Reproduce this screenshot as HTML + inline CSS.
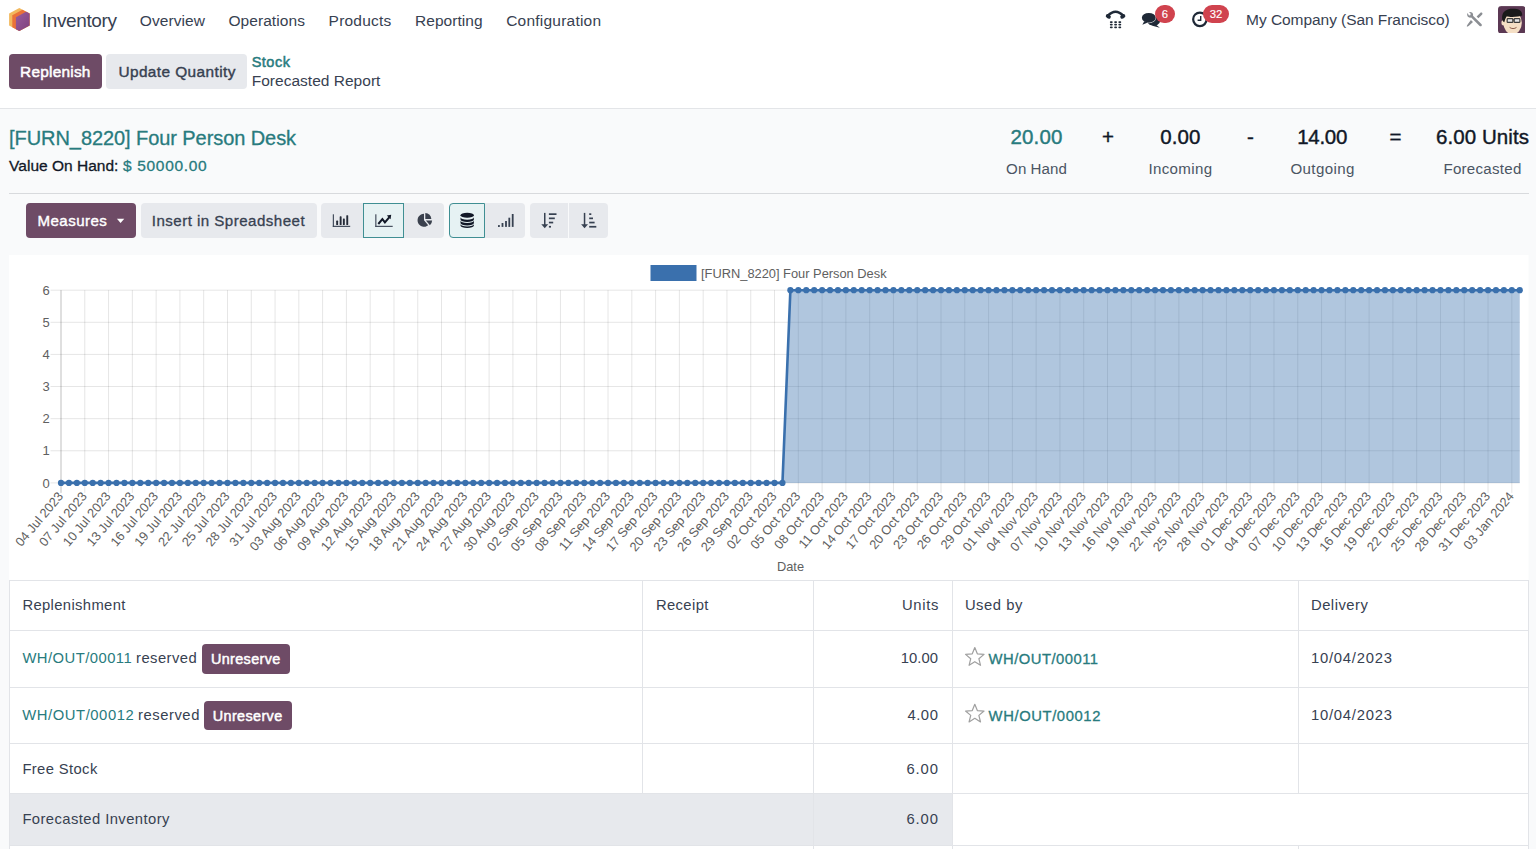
<!DOCTYPE html>
<html><head><meta charset="utf-8"><title>Inventory - Forecasted Report</title>
<style>
*{box-sizing:border-box;margin:0;padding:0}
html,body{width:1536px;height:849px;overflow:hidden}
body{position:relative;background:#f9fafb;font-family:"Liberation Sans",sans-serif;color:#374151}
.abs{position:absolute}
.t{position:absolute;white-space:nowrap;line-height:1;font-family:"Liberation Sans",sans-serif}
.top{position:absolute;left:0;top:0;width:1536px;height:108.5px;background:#fff;border-bottom:1.5px solid #e3e5e8}
.btn{position:absolute;border-radius:4px}
.prim{background:#6e4b66}
.sec{background:#e7e9ed}
.act{background:#e6f2f3;border:1px solid #3f8f93}
.hr{position:absolute;height:1px;background:#d8dadd}
.tbl{position:absolute;background:#fff}
.hl{position:absolute;height:1px;background:#e2e4e8}
.vl{position:absolute;width:1px;background:#e2e4e8}
.badge{position:absolute;background:#d0434e;color:#fff;font-weight:400;-webkit-text-stroke:0.15px #fff;font-size:11.3px;line-height:18px;text-align:center;border-radius:9px}

</style></head><body>
<div class="top"></div>
<!-- logo -->
<svg class="abs" style="left:0;top:0" width="40" height="40" viewBox="0 0 40 40">
<defs><linearGradient id="pg" x1="0" y1="0" x2="1" y2="1"><stop offset="0" stop-color="#9a5c9d"/><stop offset="1" stop-color="#7f417d"/></linearGradient></defs>
<polygon points="19.3,8 29.6,13.5 29.6,25.6 19.3,31.1 9.1,25.6 9.1,13.5" fill="#f2b95e"/>
<polygon points="12.3,15.2 22.5,9.7 29.6,13.5 29.6,25.6 19.3,31.1 12.3,27.3" fill="#ea7139"/>
<polygon points="15.9,17.15 26.1,11.65 29.6,13.5 29.6,25.6 19.3,31.1 15.9,29.25" fill="url(#pg)"/>
</svg>
<!-- phone icon -->
<svg class="abs" style="left:1100px;top:5px" width="30" height="28" viewBox="0 0 30 28">
<g fill="#1f2937">
<path d="M7.6,11 Q15.55,2.6 23.5,11" fill="none" stroke="#1f2937" stroke-width="2.5"/>
<ellipse cx="8.3" cy="11.4" rx="2.7" ry="2.1" transform="rotate(35 8.3 11.4)"/>
<ellipse cx="22.8" cy="11.4" rx="2.7" ry="2.1" transform="rotate(-35 22.8 11.4)"/>
<rect x="9.9" y="16.2" width="2.8" height="1.8" rx="0.8"/><rect x="14.2" y="16.2" width="2.8" height="1.8" rx="0.8"/><rect x="18.4" y="16.2" width="2.8" height="1.8" rx="0.8"/>
<rect x="9.9" y="18.8" width="2.8" height="1.8" rx="0.8"/><rect x="14.2" y="18.8" width="2.8" height="1.8" rx="0.8"/><rect x="18.4" y="18.8" width="2.8" height="1.8" rx="0.8"/>
<rect x="9.9" y="21.4" width="2.8" height="1.8" rx="0.8"/><rect x="14.2" y="21.4" width="2.8" height="1.8" rx="0.8"/><rect x="18.4" y="21.4" width="2.8" height="1.8" rx="0.8"/>
</g></svg>
<!-- chat icon -->
<svg class="abs" style="left:1138px;top:3px" width="40" height="30" viewBox="0 0 40 30">
<g fill="#1f2937">
<ellipse cx="15.6" cy="18.2" rx="6.4" ry="4.4"/>
<polygon points="17.5,21.2 21.8,24.8 13.5,22.5"/>
<ellipse cx="10.8" cy="14.85" rx="7.3" ry="5.3" fill="#fff"/>
<ellipse cx="10.8" cy="14.85" rx="6.9" ry="4.95"/>
<polygon points="6.2,18.3 4.4,21.8 9.8,19.6"/>
</g></svg>
<div class="badge" style="left:1155.3px;top:5.3px;width:19.3px;height:17.8px">6</div>
<!-- clock icon -->
<svg class="abs" style="left:1188px;top:3px" width="30" height="30" viewBox="0 0 30 30">
<circle cx="11.9" cy="16.35" r="6.75" fill="none" stroke="#1f2937" stroke-width="2.2"/>
<path d="M12.7,12.9 V17.3 H9.6" fill="none" stroke="#1f2937" stroke-width="1.4"/>
</svg>
<div class="badge" style="left:1202.8px;top:5.3px;width:25.8px;height:17.8px;padding-left:0.5px">32</div>
<!-- tools icon -->
<svg class="abs" style="left:1460px;top:3px" width="30" height="30" viewBox="0 0 30 30">
<g fill="#8b8e93">
<path d="M7.6,10 C6.8,11.3 7.1,13 8.3,14 C9.1,14.6 10.2,14.8 11.2,14.5 L19.6,22.9 C20.2,23.5 21,23.5 21.5,23 C22,22.5 22,21.7 21.4,21.1 L13,12.8 C13.3,11.8 13.1,10.6 12.3,9.8 C11.4,9 10.1,8.7 9,9.1 L10.7,10.8 L10.4,12.3 L8.9,12.6 Z"/>
<path d="M16.6,13.6 L20.2,9.9 C20.8,9.3 21.6,9.3 22.1,9.8 C22.6,10.3 22.6,11.1 22,11.7 L18.4,15.3 Z"/>
<path d="M10.9,16.9 L13,19 L9.2,22.6 C8.3,23.4 7.2,23.9 6.9,23.6 C6.6,23.3 7,22.2 7.8,21.3 Z"/>
</g></svg>
<!-- avatar -->
<svg class="abs" style="left:1497.6px;top:5.7px" width="27.6" height="27.8" viewBox="0 0 28 28">
<defs><clipPath id="avc"><rect x="0" y="0" width="28" height="28" rx="3.5"/></clipPath></defs>
<g clip-path="url(#avc)">
<rect x="0" y="0" width="28" height="28" fill="#5b3853"/>
<ellipse cx="14.8" cy="17" rx="9.4" ry="11.6" fill="#f5dfc5"/>
<ellipse cx="5.6" cy="17" rx="2.1" ry="2.8" fill="#f5dfc5"/>
<path d="M4.2,13 C3.5,5 9,2.6 15,2.6 C21,2.6 25,4.5 24.6,9.6 C22,11 13,11.5 8.6,10.6 C7.6,12.4 6.8,14.4 6.4,16.4 C5.2,15.6 4.4,14.4 4.2,13 Z" fill="#1a1a1a"/>
<rect x="9.3" y="12.8" width="5.8" height="3.8" rx="0.8" fill="#e6e6e6" stroke="#3a3a3a" stroke-width="1.2"/>
<rect x="16.4" y="12.8" width="5.8" height="3.8" rx="0.8" fill="#e6e6e6" stroke="#3a3a3a" stroke-width="1.2"/>
<path d="M14.6,14 H16.6" stroke="#3a3a3a" stroke-width="1"/>
<path d="M11.8,21.6 C13.5,23.2 17,23.2 18.8,21.6" stroke="#8a5a48" stroke-width="1" fill="none"/>
</g></svg>
<!-- control panel buttons -->
<div class="btn prim" style="left:8.8px;top:53.8px;width:93px;height:35.3px"></div>
<div class="btn sec" style="left:106.4px;top:53.8px;width:140.5px;height:35.3px"></div>
<!-- header hr -->
<div class="hr" style="left:8.5px;top:193px;width:1520px"></div>
<!-- toolbar -->
<div class="btn prim" style="left:25.9px;top:202.8px;width:110.1px;height:35.2px"></div>
<svg class="abs" style="left:116px;top:217px" width="10" height="7" viewBox="0 0 10 7"><polygon points="0.9,1.8 8.3,1.8 4.6,6.1" fill="#fff"/></svg>
<div class="btn sec" style="left:140.5px;top:202.8px;width:176px;height:35.2px"></div>
<div class="btn sec" style="left:321.3px;top:202.8px;width:122.6px;height:35.2px"></div>
<div class="abs act" style="left:363.2px;top:202.8px;width:40.8px;height:35.2px"></div>
<div class="btn sec" style="left:448.8px;top:202.8px;width:76.2px;height:35.2px"></div>
<div class="abs act" style="left:448.8px;top:202.8px;width:36px;height:35.2px;border-radius:4px 0 0 4px"></div>
<div class="btn sec" style="left:529.8px;top:202.8px;width:78.3px;height:35.2px"></div>
<div class="abs" style="left:568.4px;top:202.8px;width:1px;height:35.2px;background:#f9fafb"></div>
<!-- toolbar icons -->
<svg class="abs" style="left:320px;top:200px" width="300" height="40" viewBox="320 200 300 40">
<g fill="#374151">
<rect x="332.8" y="214.3" width="1.1" height="12.6"/><rect x="332.8" y="225.8" width="17.4" height="1.1"/>
<g fill="#252b38"><rect x="336.2" y="220.6" width="1.9" height="4.4" rx="0.6"/><rect x="339.7" y="216.3" width="1.9" height="8.7" rx="0.6"/><rect x="342.9" y="218.5" width="1.9" height="6.5" rx="0.6"/><rect x="346.3" y="215.2" width="1.9" height="9.8" rx="0.6"/></g>
<rect x="375.3" y="214.3" width="1.1" height="12.6"/><rect x="375.3" y="225.8" width="17.4" height="1.1"/>
</g>
<polyline points="378.3,224 382.4,219.2 384.9,222.4 389.2,217.3" fill="none" stroke="#111827" stroke-width="2" stroke-linejoin="miter"/>
<polygon points="386.8,215.6 391.2,214.8 390.6,219.3" fill="#111827"/>
<g fill="#3a404d">
<path d="M424,220.3 L424,213.8 A6.5,6.5 0 1 0 428.2,225.3 Z"/>
<path d="M425.3,218.9 V212.9 A6,6 0 0 1 431.3,218.9 Z"/>
<path d="M425.9,220.6 H432.1 A6.3,6.3 0 0 1 429.9,225.3 Z"/>
</g>
<g fill="#111827">
<ellipse cx="467.2" cy="215.3" rx="6.7" ry="2.5"/>
<path d="M460.5,217.2 A6.7,2.5 0 0 0 473.9,217.2 V219.6 A6.7,2.5 0 0 1 460.5,219.6 Z"/>
<path d="M460.5,220.6 A6.7,2.5 0 0 0 473.9,220.6 V223 A6.7,2.5 0 0 1 460.5,223 Z"/>
<path d="M460.5,224 A6.7,2.5 0 0 0 473.9,224 V225.4 A6.7,2.5 0 0 1 460.5,225.4 Z"/>
</g>
<g fill="#374151">
<rect x="498" y="225" width="1.8" height="1.9" rx="0.5"/><rect x="501.6" y="223" width="1.8" height="3.9"/><rect x="505.1" y="221" width="1.8" height="5.9"/><rect x="508.4" y="217.7" width="1.8" height="9.2"/><rect x="511.8" y="214" width="1.8" height="12.9"/>
<rect x="544" y="212.9" width="1.5" height="12.5"/><polygon points="541.3,224.3 548.2,224.3 544.75,228.2"/>
<rect x="548.9" y="213.3" width="7.6" height="1.7"/><rect x="548.9" y="217.5" width="5.9" height="1.7"/><rect x="548.9" y="221.7" width="4.3" height="1.7"/><rect x="548.9" y="225.9" width="2.1" height="1.7"/>
<rect x="583.8" y="212.9" width="1.5" height="12.5"/><polygon points="581.1,224.3 588,224.3 584.55,228.2"/>
<rect x="589.2" y="213.3" width="2.1" height="1.7"/><rect x="589.2" y="217.5" width="3.8" height="1.7"/><rect x="589.2" y="221.7" width="5.4" height="1.7"/><rect x="589.2" y="225.9" width="7.1" height="1.7"/>
</g>
</svg>
<svg width="1536" height="849" viewBox="0 0 1536 849" style="position:absolute;left:0;top:0">
<rect x="9" y="255" width="1519.5" height="325" fill="#ffffff"/>
<line x1="50.5" y1="482.90" x2="1519.75" y2="482.90" stroke="rgba(0,0,0,0.1)" stroke-width="1"/>
<line x1="50.5" y1="450.78" x2="1519.75" y2="450.78" stroke="rgba(0,0,0,0.1)" stroke-width="1"/>
<line x1="50.5" y1="418.66" x2="1519.75" y2="418.66" stroke="rgba(0,0,0,0.1)" stroke-width="1"/>
<line x1="50.5" y1="386.54" x2="1519.75" y2="386.54" stroke="rgba(0,0,0,0.1)" stroke-width="1"/>
<line x1="50.5" y1="354.42" x2="1519.75" y2="354.42" stroke="rgba(0,0,0,0.1)" stroke-width="1"/>
<line x1="50.5" y1="322.30" x2="1519.75" y2="322.30" stroke="rgba(0,0,0,0.1)" stroke-width="1"/>
<line x1="50.5" y1="290.18" x2="1519.75" y2="290.18" stroke="rgba(0,0,0,0.1)" stroke-width="1"/>
<line x1="61.00" y1="290.18" x2="61.00" y2="492.90" stroke="rgba(0,0,0,0.25)" stroke-width="1"/>
<line x1="84.78" y1="290.18" x2="84.78" y2="492.90" stroke="rgba(0,0,0,0.1)" stroke-width="1"/>
<line x1="108.57" y1="290.18" x2="108.57" y2="492.90" stroke="rgba(0,0,0,0.1)" stroke-width="1"/>
<line x1="132.35" y1="290.18" x2="132.35" y2="492.90" stroke="rgba(0,0,0,0.1)" stroke-width="1"/>
<line x1="156.14" y1="290.18" x2="156.14" y2="492.90" stroke="rgba(0,0,0,0.1)" stroke-width="1"/>
<line x1="179.92" y1="290.18" x2="179.92" y2="492.90" stroke="rgba(0,0,0,0.1)" stroke-width="1"/>
<line x1="203.70" y1="290.18" x2="203.70" y2="492.90" stroke="rgba(0,0,0,0.1)" stroke-width="1"/>
<line x1="227.49" y1="290.18" x2="227.49" y2="492.90" stroke="rgba(0,0,0,0.1)" stroke-width="1"/>
<line x1="251.27" y1="290.18" x2="251.27" y2="492.90" stroke="rgba(0,0,0,0.1)" stroke-width="1"/>
<line x1="275.06" y1="290.18" x2="275.06" y2="492.90" stroke="rgba(0,0,0,0.1)" stroke-width="1"/>
<line x1="298.84" y1="290.18" x2="298.84" y2="492.90" stroke="rgba(0,0,0,0.1)" stroke-width="1"/>
<line x1="322.62" y1="290.18" x2="322.62" y2="492.90" stroke="rgba(0,0,0,0.1)" stroke-width="1"/>
<line x1="346.41" y1="290.18" x2="346.41" y2="492.90" stroke="rgba(0,0,0,0.1)" stroke-width="1"/>
<line x1="370.19" y1="290.18" x2="370.19" y2="492.90" stroke="rgba(0,0,0,0.1)" stroke-width="1"/>
<line x1="393.98" y1="290.18" x2="393.98" y2="492.90" stroke="rgba(0,0,0,0.1)" stroke-width="1"/>
<line x1="417.76" y1="290.18" x2="417.76" y2="492.90" stroke="rgba(0,0,0,0.1)" stroke-width="1"/>
<line x1="441.54" y1="290.18" x2="441.54" y2="492.90" stroke="rgba(0,0,0,0.1)" stroke-width="1"/>
<line x1="465.33" y1="290.18" x2="465.33" y2="492.90" stroke="rgba(0,0,0,0.1)" stroke-width="1"/>
<line x1="489.11" y1="290.18" x2="489.11" y2="492.90" stroke="rgba(0,0,0,0.1)" stroke-width="1"/>
<line x1="512.90" y1="290.18" x2="512.90" y2="492.90" stroke="rgba(0,0,0,0.1)" stroke-width="1"/>
<line x1="536.68" y1="290.18" x2="536.68" y2="492.90" stroke="rgba(0,0,0,0.1)" stroke-width="1"/>
<line x1="560.46" y1="290.18" x2="560.46" y2="492.90" stroke="rgba(0,0,0,0.1)" stroke-width="1"/>
<line x1="584.25" y1="290.18" x2="584.25" y2="492.90" stroke="rgba(0,0,0,0.1)" stroke-width="1"/>
<line x1="608.03" y1="290.18" x2="608.03" y2="492.90" stroke="rgba(0,0,0,0.1)" stroke-width="1"/>
<line x1="631.82" y1="290.18" x2="631.82" y2="492.90" stroke="rgba(0,0,0,0.1)" stroke-width="1"/>
<line x1="655.60" y1="290.18" x2="655.60" y2="492.90" stroke="rgba(0,0,0,0.1)" stroke-width="1"/>
<line x1="679.38" y1="290.18" x2="679.38" y2="492.90" stroke="rgba(0,0,0,0.1)" stroke-width="1"/>
<line x1="703.17" y1="290.18" x2="703.17" y2="492.90" stroke="rgba(0,0,0,0.1)" stroke-width="1"/>
<line x1="726.95" y1="290.18" x2="726.95" y2="492.90" stroke="rgba(0,0,0,0.1)" stroke-width="1"/>
<line x1="750.74" y1="290.18" x2="750.74" y2="492.90" stroke="rgba(0,0,0,0.1)" stroke-width="1"/>
<line x1="774.52" y1="290.18" x2="774.52" y2="492.90" stroke="rgba(0,0,0,0.1)" stroke-width="1"/>
<line x1="798.30" y1="290.18" x2="798.30" y2="492.90" stroke="rgba(0,0,0,0.1)" stroke-width="1"/>
<line x1="822.09" y1="290.18" x2="822.09" y2="492.90" stroke="rgba(0,0,0,0.1)" stroke-width="1"/>
<line x1="845.87" y1="290.18" x2="845.87" y2="492.90" stroke="rgba(0,0,0,0.1)" stroke-width="1"/>
<line x1="869.66" y1="290.18" x2="869.66" y2="492.90" stroke="rgba(0,0,0,0.1)" stroke-width="1"/>
<line x1="893.44" y1="290.18" x2="893.44" y2="492.90" stroke="rgba(0,0,0,0.1)" stroke-width="1"/>
<line x1="917.22" y1="290.18" x2="917.22" y2="492.90" stroke="rgba(0,0,0,0.1)" stroke-width="1"/>
<line x1="941.01" y1="290.18" x2="941.01" y2="492.90" stroke="rgba(0,0,0,0.1)" stroke-width="1"/>
<line x1="964.79" y1="290.18" x2="964.79" y2="492.90" stroke="rgba(0,0,0,0.1)" stroke-width="1"/>
<line x1="988.58" y1="290.18" x2="988.58" y2="492.90" stroke="rgba(0,0,0,0.1)" stroke-width="1"/>
<line x1="1012.36" y1="290.18" x2="1012.36" y2="492.90" stroke="rgba(0,0,0,0.1)" stroke-width="1"/>
<line x1="1036.14" y1="290.18" x2="1036.14" y2="492.90" stroke="rgba(0,0,0,0.1)" stroke-width="1"/>
<line x1="1059.93" y1="290.18" x2="1059.93" y2="492.90" stroke="rgba(0,0,0,0.1)" stroke-width="1"/>
<line x1="1083.71" y1="290.18" x2="1083.71" y2="492.90" stroke="rgba(0,0,0,0.1)" stroke-width="1"/>
<line x1="1107.50" y1="290.18" x2="1107.50" y2="492.90" stroke="rgba(0,0,0,0.1)" stroke-width="1"/>
<line x1="1131.28" y1="290.18" x2="1131.28" y2="492.90" stroke="rgba(0,0,0,0.1)" stroke-width="1"/>
<line x1="1155.06" y1="290.18" x2="1155.06" y2="492.90" stroke="rgba(0,0,0,0.1)" stroke-width="1"/>
<line x1="1178.85" y1="290.18" x2="1178.85" y2="492.90" stroke="rgba(0,0,0,0.1)" stroke-width="1"/>
<line x1="1202.63" y1="290.18" x2="1202.63" y2="492.90" stroke="rgba(0,0,0,0.1)" stroke-width="1"/>
<line x1="1226.42" y1="290.18" x2="1226.42" y2="492.90" stroke="rgba(0,0,0,0.1)" stroke-width="1"/>
<line x1="1250.20" y1="290.18" x2="1250.20" y2="492.90" stroke="rgba(0,0,0,0.1)" stroke-width="1"/>
<line x1="1273.98" y1="290.18" x2="1273.98" y2="492.90" stroke="rgba(0,0,0,0.1)" stroke-width="1"/>
<line x1="1297.77" y1="290.18" x2="1297.77" y2="492.90" stroke="rgba(0,0,0,0.1)" stroke-width="1"/>
<line x1="1321.55" y1="290.18" x2="1321.55" y2="492.90" stroke="rgba(0,0,0,0.1)" stroke-width="1"/>
<line x1="1345.34" y1="290.18" x2="1345.34" y2="492.90" stroke="rgba(0,0,0,0.1)" stroke-width="1"/>
<line x1="1369.12" y1="290.18" x2="1369.12" y2="492.90" stroke="rgba(0,0,0,0.1)" stroke-width="1"/>
<line x1="1392.90" y1="290.18" x2="1392.90" y2="492.90" stroke="rgba(0,0,0,0.1)" stroke-width="1"/>
<line x1="1416.69" y1="290.18" x2="1416.69" y2="492.90" stroke="rgba(0,0,0,0.1)" stroke-width="1"/>
<line x1="1440.47" y1="290.18" x2="1440.47" y2="492.90" stroke="rgba(0,0,0,0.1)" stroke-width="1"/>
<line x1="1464.26" y1="290.18" x2="1464.26" y2="492.90" stroke="rgba(0,0,0,0.1)" stroke-width="1"/>
<line x1="1488.04" y1="290.18" x2="1488.04" y2="492.90" stroke="rgba(0,0,0,0.1)" stroke-width="1"/>
<line x1="1511.82" y1="290.18" x2="1511.82" y2="492.90" stroke="rgba(0,0,0,0.1)" stroke-width="1"/>
<polygon points="61.00,482.90 61.00,482.90 68.93,482.90 76.86,482.90 84.78,482.90 92.71,482.90 100.64,482.90 108.57,482.90 116.50,482.90 124.42,482.90 132.35,482.90 140.28,482.90 148.21,482.90 156.14,482.90 164.06,482.90 171.99,482.90 179.92,482.90 187.85,482.90 195.78,482.90 203.70,482.90 211.63,482.90 219.56,482.90 227.49,482.90 235.42,482.90 243.34,482.90 251.27,482.90 259.20,482.90 267.13,482.90 275.06,482.90 282.98,482.90 290.91,482.90 298.84,482.90 306.77,482.90 314.70,482.90 322.62,482.90 330.55,482.90 338.48,482.90 346.41,482.90 354.34,482.90 362.26,482.90 370.19,482.90 378.12,482.90 386.05,482.90 393.98,482.90 401.90,482.90 409.83,482.90 417.76,482.90 425.69,482.90 433.62,482.90 441.54,482.90 449.47,482.90 457.40,482.90 465.33,482.90 473.26,482.90 481.18,482.90 489.11,482.90 497.04,482.90 504.97,482.90 512.90,482.90 520.82,482.90 528.75,482.90 536.68,482.90 544.61,482.90 552.54,482.90 560.46,482.90 568.39,482.90 576.32,482.90 584.25,482.90 592.18,482.90 600.10,482.90 608.03,482.90 615.96,482.90 623.89,482.90 631.82,482.90 639.74,482.90 647.67,482.90 655.60,482.90 663.53,482.90 671.46,482.90 679.38,482.90 687.31,482.90 695.24,482.90 703.17,482.90 711.10,482.90 719.02,482.90 726.95,482.90 734.88,482.90 742.81,482.90 750.74,482.90 758.66,482.90 766.59,482.90 774.52,482.90 782.45,482.90 790.38,290.18 798.30,290.18 806.23,290.18 814.16,290.18 822.09,290.18 830.02,290.18 837.94,290.18 845.87,290.18 853.80,290.18 861.73,290.18 869.66,290.18 877.58,290.18 885.51,290.18 893.44,290.18 901.37,290.18 909.30,290.18 917.22,290.18 925.15,290.18 933.08,290.18 941.01,290.18 948.94,290.18 956.86,290.18 964.79,290.18 972.72,290.18 980.65,290.18 988.58,290.18 996.50,290.18 1004.43,290.18 1012.36,290.18 1020.29,290.18 1028.22,290.18 1036.14,290.18 1044.07,290.18 1052.00,290.18 1059.93,290.18 1067.86,290.18 1075.78,290.18 1083.71,290.18 1091.64,290.18 1099.57,290.18 1107.50,290.18 1115.42,290.18 1123.35,290.18 1131.28,290.18 1139.21,290.18 1147.14,290.18 1155.06,290.18 1162.99,290.18 1170.92,290.18 1178.85,290.18 1186.78,290.18 1194.70,290.18 1202.63,290.18 1210.56,290.18 1218.49,290.18 1226.42,290.18 1234.34,290.18 1242.27,290.18 1250.20,290.18 1258.13,290.18 1266.06,290.18 1273.98,290.18 1281.91,290.18 1289.84,290.18 1297.77,290.18 1305.70,290.18 1313.62,290.18 1321.55,290.18 1329.48,290.18 1337.41,290.18 1345.34,290.18 1353.26,290.18 1361.19,290.18 1369.12,290.18 1377.05,290.18 1384.98,290.18 1392.90,290.18 1400.83,290.18 1408.76,290.18 1416.69,290.18 1424.62,290.18 1432.54,290.18 1440.47,290.18 1448.40,290.18 1456.33,290.18 1464.26,290.18 1472.18,290.18 1480.11,290.18 1488.04,290.18 1495.97,290.18 1503.90,290.18 1511.82,290.18 1519.75,290.18 1519.75,482.90" fill="rgba(58,112,173,0.4)"/>
<polyline points="61.00,482.90 68.93,482.90 76.86,482.90 84.78,482.90 92.71,482.90 100.64,482.90 108.57,482.90 116.50,482.90 124.42,482.90 132.35,482.90 140.28,482.90 148.21,482.90 156.14,482.90 164.06,482.90 171.99,482.90 179.92,482.90 187.85,482.90 195.78,482.90 203.70,482.90 211.63,482.90 219.56,482.90 227.49,482.90 235.42,482.90 243.34,482.90 251.27,482.90 259.20,482.90 267.13,482.90 275.06,482.90 282.98,482.90 290.91,482.90 298.84,482.90 306.77,482.90 314.70,482.90 322.62,482.90 330.55,482.90 338.48,482.90 346.41,482.90 354.34,482.90 362.26,482.90 370.19,482.90 378.12,482.90 386.05,482.90 393.98,482.90 401.90,482.90 409.83,482.90 417.76,482.90 425.69,482.90 433.62,482.90 441.54,482.90 449.47,482.90 457.40,482.90 465.33,482.90 473.26,482.90 481.18,482.90 489.11,482.90 497.04,482.90 504.97,482.90 512.90,482.90 520.82,482.90 528.75,482.90 536.68,482.90 544.61,482.90 552.54,482.90 560.46,482.90 568.39,482.90 576.32,482.90 584.25,482.90 592.18,482.90 600.10,482.90 608.03,482.90 615.96,482.90 623.89,482.90 631.82,482.90 639.74,482.90 647.67,482.90 655.60,482.90 663.53,482.90 671.46,482.90 679.38,482.90 687.31,482.90 695.24,482.90 703.17,482.90 711.10,482.90 719.02,482.90 726.95,482.90 734.88,482.90 742.81,482.90 750.74,482.90 758.66,482.90 766.59,482.90 774.52,482.90 782.45,482.90 790.38,290.18 798.30,290.18 806.23,290.18 814.16,290.18 822.09,290.18 830.02,290.18 837.94,290.18 845.87,290.18 853.80,290.18 861.73,290.18 869.66,290.18 877.58,290.18 885.51,290.18 893.44,290.18 901.37,290.18 909.30,290.18 917.22,290.18 925.15,290.18 933.08,290.18 941.01,290.18 948.94,290.18 956.86,290.18 964.79,290.18 972.72,290.18 980.65,290.18 988.58,290.18 996.50,290.18 1004.43,290.18 1012.36,290.18 1020.29,290.18 1028.22,290.18 1036.14,290.18 1044.07,290.18 1052.00,290.18 1059.93,290.18 1067.86,290.18 1075.78,290.18 1083.71,290.18 1091.64,290.18 1099.57,290.18 1107.50,290.18 1115.42,290.18 1123.35,290.18 1131.28,290.18 1139.21,290.18 1147.14,290.18 1155.06,290.18 1162.99,290.18 1170.92,290.18 1178.85,290.18 1186.78,290.18 1194.70,290.18 1202.63,290.18 1210.56,290.18 1218.49,290.18 1226.42,290.18 1234.34,290.18 1242.27,290.18 1250.20,290.18 1258.13,290.18 1266.06,290.18 1273.98,290.18 1281.91,290.18 1289.84,290.18 1297.77,290.18 1305.70,290.18 1313.62,290.18 1321.55,290.18 1329.48,290.18 1337.41,290.18 1345.34,290.18 1353.26,290.18 1361.19,290.18 1369.12,290.18 1377.05,290.18 1384.98,290.18 1392.90,290.18 1400.83,290.18 1408.76,290.18 1416.69,290.18 1424.62,290.18 1432.54,290.18 1440.47,290.18 1448.40,290.18 1456.33,290.18 1464.26,290.18 1472.18,290.18 1480.11,290.18 1488.04,290.18 1495.97,290.18 1503.90,290.18 1511.82,290.18 1519.75,290.18" fill="none" stroke="#3a70ad" stroke-width="2.6"/>
<circle cx="61.00" cy="482.90" r="3.1" fill="#3a70ad"/>
<circle cx="68.93" cy="482.90" r="3.1" fill="#3a70ad"/>
<circle cx="76.86" cy="482.90" r="3.1" fill="#3a70ad"/>
<circle cx="84.78" cy="482.90" r="3.1" fill="#3a70ad"/>
<circle cx="92.71" cy="482.90" r="3.1" fill="#3a70ad"/>
<circle cx="100.64" cy="482.90" r="3.1" fill="#3a70ad"/>
<circle cx="108.57" cy="482.90" r="3.1" fill="#3a70ad"/>
<circle cx="116.50" cy="482.90" r="3.1" fill="#3a70ad"/>
<circle cx="124.42" cy="482.90" r="3.1" fill="#3a70ad"/>
<circle cx="132.35" cy="482.90" r="3.1" fill="#3a70ad"/>
<circle cx="140.28" cy="482.90" r="3.1" fill="#3a70ad"/>
<circle cx="148.21" cy="482.90" r="3.1" fill="#3a70ad"/>
<circle cx="156.14" cy="482.90" r="3.1" fill="#3a70ad"/>
<circle cx="164.06" cy="482.90" r="3.1" fill="#3a70ad"/>
<circle cx="171.99" cy="482.90" r="3.1" fill="#3a70ad"/>
<circle cx="179.92" cy="482.90" r="3.1" fill="#3a70ad"/>
<circle cx="187.85" cy="482.90" r="3.1" fill="#3a70ad"/>
<circle cx="195.78" cy="482.90" r="3.1" fill="#3a70ad"/>
<circle cx="203.70" cy="482.90" r="3.1" fill="#3a70ad"/>
<circle cx="211.63" cy="482.90" r="3.1" fill="#3a70ad"/>
<circle cx="219.56" cy="482.90" r="3.1" fill="#3a70ad"/>
<circle cx="227.49" cy="482.90" r="3.1" fill="#3a70ad"/>
<circle cx="235.42" cy="482.90" r="3.1" fill="#3a70ad"/>
<circle cx="243.34" cy="482.90" r="3.1" fill="#3a70ad"/>
<circle cx="251.27" cy="482.90" r="3.1" fill="#3a70ad"/>
<circle cx="259.20" cy="482.90" r="3.1" fill="#3a70ad"/>
<circle cx="267.13" cy="482.90" r="3.1" fill="#3a70ad"/>
<circle cx="275.06" cy="482.90" r="3.1" fill="#3a70ad"/>
<circle cx="282.98" cy="482.90" r="3.1" fill="#3a70ad"/>
<circle cx="290.91" cy="482.90" r="3.1" fill="#3a70ad"/>
<circle cx="298.84" cy="482.90" r="3.1" fill="#3a70ad"/>
<circle cx="306.77" cy="482.90" r="3.1" fill="#3a70ad"/>
<circle cx="314.70" cy="482.90" r="3.1" fill="#3a70ad"/>
<circle cx="322.62" cy="482.90" r="3.1" fill="#3a70ad"/>
<circle cx="330.55" cy="482.90" r="3.1" fill="#3a70ad"/>
<circle cx="338.48" cy="482.90" r="3.1" fill="#3a70ad"/>
<circle cx="346.41" cy="482.90" r="3.1" fill="#3a70ad"/>
<circle cx="354.34" cy="482.90" r="3.1" fill="#3a70ad"/>
<circle cx="362.26" cy="482.90" r="3.1" fill="#3a70ad"/>
<circle cx="370.19" cy="482.90" r="3.1" fill="#3a70ad"/>
<circle cx="378.12" cy="482.90" r="3.1" fill="#3a70ad"/>
<circle cx="386.05" cy="482.90" r="3.1" fill="#3a70ad"/>
<circle cx="393.98" cy="482.90" r="3.1" fill="#3a70ad"/>
<circle cx="401.90" cy="482.90" r="3.1" fill="#3a70ad"/>
<circle cx="409.83" cy="482.90" r="3.1" fill="#3a70ad"/>
<circle cx="417.76" cy="482.90" r="3.1" fill="#3a70ad"/>
<circle cx="425.69" cy="482.90" r="3.1" fill="#3a70ad"/>
<circle cx="433.62" cy="482.90" r="3.1" fill="#3a70ad"/>
<circle cx="441.54" cy="482.90" r="3.1" fill="#3a70ad"/>
<circle cx="449.47" cy="482.90" r="3.1" fill="#3a70ad"/>
<circle cx="457.40" cy="482.90" r="3.1" fill="#3a70ad"/>
<circle cx="465.33" cy="482.90" r="3.1" fill="#3a70ad"/>
<circle cx="473.26" cy="482.90" r="3.1" fill="#3a70ad"/>
<circle cx="481.18" cy="482.90" r="3.1" fill="#3a70ad"/>
<circle cx="489.11" cy="482.90" r="3.1" fill="#3a70ad"/>
<circle cx="497.04" cy="482.90" r="3.1" fill="#3a70ad"/>
<circle cx="504.97" cy="482.90" r="3.1" fill="#3a70ad"/>
<circle cx="512.90" cy="482.90" r="3.1" fill="#3a70ad"/>
<circle cx="520.82" cy="482.90" r="3.1" fill="#3a70ad"/>
<circle cx="528.75" cy="482.90" r="3.1" fill="#3a70ad"/>
<circle cx="536.68" cy="482.90" r="3.1" fill="#3a70ad"/>
<circle cx="544.61" cy="482.90" r="3.1" fill="#3a70ad"/>
<circle cx="552.54" cy="482.90" r="3.1" fill="#3a70ad"/>
<circle cx="560.46" cy="482.90" r="3.1" fill="#3a70ad"/>
<circle cx="568.39" cy="482.90" r="3.1" fill="#3a70ad"/>
<circle cx="576.32" cy="482.90" r="3.1" fill="#3a70ad"/>
<circle cx="584.25" cy="482.90" r="3.1" fill="#3a70ad"/>
<circle cx="592.18" cy="482.90" r="3.1" fill="#3a70ad"/>
<circle cx="600.10" cy="482.90" r="3.1" fill="#3a70ad"/>
<circle cx="608.03" cy="482.90" r="3.1" fill="#3a70ad"/>
<circle cx="615.96" cy="482.90" r="3.1" fill="#3a70ad"/>
<circle cx="623.89" cy="482.90" r="3.1" fill="#3a70ad"/>
<circle cx="631.82" cy="482.90" r="3.1" fill="#3a70ad"/>
<circle cx="639.74" cy="482.90" r="3.1" fill="#3a70ad"/>
<circle cx="647.67" cy="482.90" r="3.1" fill="#3a70ad"/>
<circle cx="655.60" cy="482.90" r="3.1" fill="#3a70ad"/>
<circle cx="663.53" cy="482.90" r="3.1" fill="#3a70ad"/>
<circle cx="671.46" cy="482.90" r="3.1" fill="#3a70ad"/>
<circle cx="679.38" cy="482.90" r="3.1" fill="#3a70ad"/>
<circle cx="687.31" cy="482.90" r="3.1" fill="#3a70ad"/>
<circle cx="695.24" cy="482.90" r="3.1" fill="#3a70ad"/>
<circle cx="703.17" cy="482.90" r="3.1" fill="#3a70ad"/>
<circle cx="711.10" cy="482.90" r="3.1" fill="#3a70ad"/>
<circle cx="719.02" cy="482.90" r="3.1" fill="#3a70ad"/>
<circle cx="726.95" cy="482.90" r="3.1" fill="#3a70ad"/>
<circle cx="734.88" cy="482.90" r="3.1" fill="#3a70ad"/>
<circle cx="742.81" cy="482.90" r="3.1" fill="#3a70ad"/>
<circle cx="750.74" cy="482.90" r="3.1" fill="#3a70ad"/>
<circle cx="758.66" cy="482.90" r="3.1" fill="#3a70ad"/>
<circle cx="766.59" cy="482.90" r="3.1" fill="#3a70ad"/>
<circle cx="774.52" cy="482.90" r="3.1" fill="#3a70ad"/>
<circle cx="782.45" cy="482.90" r="3.1" fill="#3a70ad"/>
<circle cx="790.38" cy="290.18" r="3.1" fill="#3a70ad"/>
<circle cx="798.30" cy="290.18" r="3.1" fill="#3a70ad"/>
<circle cx="806.23" cy="290.18" r="3.1" fill="#3a70ad"/>
<circle cx="814.16" cy="290.18" r="3.1" fill="#3a70ad"/>
<circle cx="822.09" cy="290.18" r="3.1" fill="#3a70ad"/>
<circle cx="830.02" cy="290.18" r="3.1" fill="#3a70ad"/>
<circle cx="837.94" cy="290.18" r="3.1" fill="#3a70ad"/>
<circle cx="845.87" cy="290.18" r="3.1" fill="#3a70ad"/>
<circle cx="853.80" cy="290.18" r="3.1" fill="#3a70ad"/>
<circle cx="861.73" cy="290.18" r="3.1" fill="#3a70ad"/>
<circle cx="869.66" cy="290.18" r="3.1" fill="#3a70ad"/>
<circle cx="877.58" cy="290.18" r="3.1" fill="#3a70ad"/>
<circle cx="885.51" cy="290.18" r="3.1" fill="#3a70ad"/>
<circle cx="893.44" cy="290.18" r="3.1" fill="#3a70ad"/>
<circle cx="901.37" cy="290.18" r="3.1" fill="#3a70ad"/>
<circle cx="909.30" cy="290.18" r="3.1" fill="#3a70ad"/>
<circle cx="917.22" cy="290.18" r="3.1" fill="#3a70ad"/>
<circle cx="925.15" cy="290.18" r="3.1" fill="#3a70ad"/>
<circle cx="933.08" cy="290.18" r="3.1" fill="#3a70ad"/>
<circle cx="941.01" cy="290.18" r="3.1" fill="#3a70ad"/>
<circle cx="948.94" cy="290.18" r="3.1" fill="#3a70ad"/>
<circle cx="956.86" cy="290.18" r="3.1" fill="#3a70ad"/>
<circle cx="964.79" cy="290.18" r="3.1" fill="#3a70ad"/>
<circle cx="972.72" cy="290.18" r="3.1" fill="#3a70ad"/>
<circle cx="980.65" cy="290.18" r="3.1" fill="#3a70ad"/>
<circle cx="988.58" cy="290.18" r="3.1" fill="#3a70ad"/>
<circle cx="996.50" cy="290.18" r="3.1" fill="#3a70ad"/>
<circle cx="1004.43" cy="290.18" r="3.1" fill="#3a70ad"/>
<circle cx="1012.36" cy="290.18" r="3.1" fill="#3a70ad"/>
<circle cx="1020.29" cy="290.18" r="3.1" fill="#3a70ad"/>
<circle cx="1028.22" cy="290.18" r="3.1" fill="#3a70ad"/>
<circle cx="1036.14" cy="290.18" r="3.1" fill="#3a70ad"/>
<circle cx="1044.07" cy="290.18" r="3.1" fill="#3a70ad"/>
<circle cx="1052.00" cy="290.18" r="3.1" fill="#3a70ad"/>
<circle cx="1059.93" cy="290.18" r="3.1" fill="#3a70ad"/>
<circle cx="1067.86" cy="290.18" r="3.1" fill="#3a70ad"/>
<circle cx="1075.78" cy="290.18" r="3.1" fill="#3a70ad"/>
<circle cx="1083.71" cy="290.18" r="3.1" fill="#3a70ad"/>
<circle cx="1091.64" cy="290.18" r="3.1" fill="#3a70ad"/>
<circle cx="1099.57" cy="290.18" r="3.1" fill="#3a70ad"/>
<circle cx="1107.50" cy="290.18" r="3.1" fill="#3a70ad"/>
<circle cx="1115.42" cy="290.18" r="3.1" fill="#3a70ad"/>
<circle cx="1123.35" cy="290.18" r="3.1" fill="#3a70ad"/>
<circle cx="1131.28" cy="290.18" r="3.1" fill="#3a70ad"/>
<circle cx="1139.21" cy="290.18" r="3.1" fill="#3a70ad"/>
<circle cx="1147.14" cy="290.18" r="3.1" fill="#3a70ad"/>
<circle cx="1155.06" cy="290.18" r="3.1" fill="#3a70ad"/>
<circle cx="1162.99" cy="290.18" r="3.1" fill="#3a70ad"/>
<circle cx="1170.92" cy="290.18" r="3.1" fill="#3a70ad"/>
<circle cx="1178.85" cy="290.18" r="3.1" fill="#3a70ad"/>
<circle cx="1186.78" cy="290.18" r="3.1" fill="#3a70ad"/>
<circle cx="1194.70" cy="290.18" r="3.1" fill="#3a70ad"/>
<circle cx="1202.63" cy="290.18" r="3.1" fill="#3a70ad"/>
<circle cx="1210.56" cy="290.18" r="3.1" fill="#3a70ad"/>
<circle cx="1218.49" cy="290.18" r="3.1" fill="#3a70ad"/>
<circle cx="1226.42" cy="290.18" r="3.1" fill="#3a70ad"/>
<circle cx="1234.34" cy="290.18" r="3.1" fill="#3a70ad"/>
<circle cx="1242.27" cy="290.18" r="3.1" fill="#3a70ad"/>
<circle cx="1250.20" cy="290.18" r="3.1" fill="#3a70ad"/>
<circle cx="1258.13" cy="290.18" r="3.1" fill="#3a70ad"/>
<circle cx="1266.06" cy="290.18" r="3.1" fill="#3a70ad"/>
<circle cx="1273.98" cy="290.18" r="3.1" fill="#3a70ad"/>
<circle cx="1281.91" cy="290.18" r="3.1" fill="#3a70ad"/>
<circle cx="1289.84" cy="290.18" r="3.1" fill="#3a70ad"/>
<circle cx="1297.77" cy="290.18" r="3.1" fill="#3a70ad"/>
<circle cx="1305.70" cy="290.18" r="3.1" fill="#3a70ad"/>
<circle cx="1313.62" cy="290.18" r="3.1" fill="#3a70ad"/>
<circle cx="1321.55" cy="290.18" r="3.1" fill="#3a70ad"/>
<circle cx="1329.48" cy="290.18" r="3.1" fill="#3a70ad"/>
<circle cx="1337.41" cy="290.18" r="3.1" fill="#3a70ad"/>
<circle cx="1345.34" cy="290.18" r="3.1" fill="#3a70ad"/>
<circle cx="1353.26" cy="290.18" r="3.1" fill="#3a70ad"/>
<circle cx="1361.19" cy="290.18" r="3.1" fill="#3a70ad"/>
<circle cx="1369.12" cy="290.18" r="3.1" fill="#3a70ad"/>
<circle cx="1377.05" cy="290.18" r="3.1" fill="#3a70ad"/>
<circle cx="1384.98" cy="290.18" r="3.1" fill="#3a70ad"/>
<circle cx="1392.90" cy="290.18" r="3.1" fill="#3a70ad"/>
<circle cx="1400.83" cy="290.18" r="3.1" fill="#3a70ad"/>
<circle cx="1408.76" cy="290.18" r="3.1" fill="#3a70ad"/>
<circle cx="1416.69" cy="290.18" r="3.1" fill="#3a70ad"/>
<circle cx="1424.62" cy="290.18" r="3.1" fill="#3a70ad"/>
<circle cx="1432.54" cy="290.18" r="3.1" fill="#3a70ad"/>
<circle cx="1440.47" cy="290.18" r="3.1" fill="#3a70ad"/>
<circle cx="1448.40" cy="290.18" r="3.1" fill="#3a70ad"/>
<circle cx="1456.33" cy="290.18" r="3.1" fill="#3a70ad"/>
<circle cx="1464.26" cy="290.18" r="3.1" fill="#3a70ad"/>
<circle cx="1472.18" cy="290.18" r="3.1" fill="#3a70ad"/>
<circle cx="1480.11" cy="290.18" r="3.1" fill="#3a70ad"/>
<circle cx="1488.04" cy="290.18" r="3.1" fill="#3a70ad"/>
<circle cx="1495.97" cy="290.18" r="3.1" fill="#3a70ad"/>
<circle cx="1503.90" cy="290.18" r="3.1" fill="#3a70ad"/>
<circle cx="1511.82" cy="290.18" r="3.1" fill="#3a70ad"/>
<circle cx="1519.75" cy="290.18" r="3.1" fill="#3a70ad"/>
<text x="49.8" y="487.50" text-anchor="end" font-size="13" fill="#606060">0</text>
<text x="49.8" y="455.38" text-anchor="end" font-size="13" fill="#606060">1</text>
<text x="49.8" y="423.26" text-anchor="end" font-size="13" fill="#606060">2</text>
<text x="49.8" y="391.14" text-anchor="end" font-size="13" fill="#606060">3</text>
<text x="49.8" y="359.02" text-anchor="end" font-size="13" fill="#606060">4</text>
<text x="49.8" y="326.90" text-anchor="end" font-size="13" fill="#606060">5</text>
<text x="49.8" y="294.78" text-anchor="end" font-size="13" fill="#606060">6</text>
<text x="63.80" y="496.60" text-anchor="end" font-size="12.8" fill="#606060" transform="rotate(-50 63.80 496.60)">04 Jul 2023</text>
<text x="87.58" y="496.60" text-anchor="end" font-size="12.8" fill="#606060" transform="rotate(-50 87.58 496.60)">07 Jul 2023</text>
<text x="111.37" y="496.60" text-anchor="end" font-size="12.8" fill="#606060" transform="rotate(-50 111.37 496.60)">10 Jul 2023</text>
<text x="135.15" y="496.60" text-anchor="end" font-size="12.8" fill="#606060" transform="rotate(-50 135.15 496.60)">13 Jul 2023</text>
<text x="158.94" y="496.60" text-anchor="end" font-size="12.8" fill="#606060" transform="rotate(-50 158.94 496.60)">16 Jul 2023</text>
<text x="182.72" y="496.60" text-anchor="end" font-size="12.8" fill="#606060" transform="rotate(-50 182.72 496.60)">19 Jul 2023</text>
<text x="206.50" y="496.60" text-anchor="end" font-size="12.8" fill="#606060" transform="rotate(-50 206.50 496.60)">22 Jul 2023</text>
<text x="230.29" y="496.60" text-anchor="end" font-size="12.8" fill="#606060" transform="rotate(-50 230.29 496.60)">25 Jul 2023</text>
<text x="254.07" y="496.60" text-anchor="end" font-size="12.8" fill="#606060" transform="rotate(-50 254.07 496.60)">28 Jul 2023</text>
<text x="277.86" y="496.60" text-anchor="end" font-size="12.8" fill="#606060" transform="rotate(-50 277.86 496.60)">31 Jul 2023</text>
<text x="301.64" y="496.60" text-anchor="end" font-size="12.8" fill="#606060" transform="rotate(-50 301.64 496.60)">03 Aug 2023</text>
<text x="325.42" y="496.60" text-anchor="end" font-size="12.8" fill="#606060" transform="rotate(-50 325.42 496.60)">06 Aug 2023</text>
<text x="349.21" y="496.60" text-anchor="end" font-size="12.8" fill="#606060" transform="rotate(-50 349.21 496.60)">09 Aug 2023</text>
<text x="372.99" y="496.60" text-anchor="end" font-size="12.8" fill="#606060" transform="rotate(-50 372.99 496.60)">12 Aug 2023</text>
<text x="396.78" y="496.60" text-anchor="end" font-size="12.8" fill="#606060" transform="rotate(-50 396.78 496.60)">15 Aug 2023</text>
<text x="420.56" y="496.60" text-anchor="end" font-size="12.8" fill="#606060" transform="rotate(-50 420.56 496.60)">18 Aug 2023</text>
<text x="444.34" y="496.60" text-anchor="end" font-size="12.8" fill="#606060" transform="rotate(-50 444.34 496.60)">21 Aug 2023</text>
<text x="468.13" y="496.60" text-anchor="end" font-size="12.8" fill="#606060" transform="rotate(-50 468.13 496.60)">24 Aug 2023</text>
<text x="491.91" y="496.60" text-anchor="end" font-size="12.8" fill="#606060" transform="rotate(-50 491.91 496.60)">27 Aug 2023</text>
<text x="515.70" y="496.60" text-anchor="end" font-size="12.8" fill="#606060" transform="rotate(-50 515.70 496.60)">30 Aug 2023</text>
<text x="539.48" y="496.60" text-anchor="end" font-size="12.8" fill="#606060" transform="rotate(-50 539.48 496.60)">02 Sep 2023</text>
<text x="563.26" y="496.60" text-anchor="end" font-size="12.8" fill="#606060" transform="rotate(-50 563.26 496.60)">05 Sep 2023</text>
<text x="587.05" y="496.60" text-anchor="end" font-size="12.8" fill="#606060" transform="rotate(-50 587.05 496.60)">08 Sep 2023</text>
<text x="610.83" y="496.60" text-anchor="end" font-size="12.8" fill="#606060" transform="rotate(-50 610.83 496.60)">11 Sep 2023</text>
<text x="634.62" y="496.60" text-anchor="end" font-size="12.8" fill="#606060" transform="rotate(-50 634.62 496.60)">14 Sep 2023</text>
<text x="658.40" y="496.60" text-anchor="end" font-size="12.8" fill="#606060" transform="rotate(-50 658.40 496.60)">17 Sep 2023</text>
<text x="682.18" y="496.60" text-anchor="end" font-size="12.8" fill="#606060" transform="rotate(-50 682.18 496.60)">20 Sep 2023</text>
<text x="705.97" y="496.60" text-anchor="end" font-size="12.8" fill="#606060" transform="rotate(-50 705.97 496.60)">23 Sep 2023</text>
<text x="729.75" y="496.60" text-anchor="end" font-size="12.8" fill="#606060" transform="rotate(-50 729.75 496.60)">26 Sep 2023</text>
<text x="753.54" y="496.60" text-anchor="end" font-size="12.8" fill="#606060" transform="rotate(-50 753.54 496.60)">29 Sep 2023</text>
<text x="777.32" y="496.60" text-anchor="end" font-size="12.8" fill="#606060" transform="rotate(-50 777.32 496.60)">02 Oct 2023</text>
<text x="801.10" y="496.60" text-anchor="end" font-size="12.8" fill="#606060" transform="rotate(-50 801.10 496.60)">05 Oct 2023</text>
<text x="824.89" y="496.60" text-anchor="end" font-size="12.8" fill="#606060" transform="rotate(-50 824.89 496.60)">08 Oct 2023</text>
<text x="848.67" y="496.60" text-anchor="end" font-size="12.8" fill="#606060" transform="rotate(-50 848.67 496.60)">11 Oct 2023</text>
<text x="872.46" y="496.60" text-anchor="end" font-size="12.8" fill="#606060" transform="rotate(-50 872.46 496.60)">14 Oct 2023</text>
<text x="896.24" y="496.60" text-anchor="end" font-size="12.8" fill="#606060" transform="rotate(-50 896.24 496.60)">17 Oct 2023</text>
<text x="920.02" y="496.60" text-anchor="end" font-size="12.8" fill="#606060" transform="rotate(-50 920.02 496.60)">20 Oct 2023</text>
<text x="943.81" y="496.60" text-anchor="end" font-size="12.8" fill="#606060" transform="rotate(-50 943.81 496.60)">23 Oct 2023</text>
<text x="967.59" y="496.60" text-anchor="end" font-size="12.8" fill="#606060" transform="rotate(-50 967.59 496.60)">26 Oct 2023</text>
<text x="991.38" y="496.60" text-anchor="end" font-size="12.8" fill="#606060" transform="rotate(-50 991.38 496.60)">29 Oct 2023</text>
<text x="1015.16" y="496.60" text-anchor="end" font-size="12.8" fill="#606060" transform="rotate(-50 1015.16 496.60)">01 Nov 2023</text>
<text x="1038.94" y="496.60" text-anchor="end" font-size="12.8" fill="#606060" transform="rotate(-50 1038.94 496.60)">04 Nov 2023</text>
<text x="1062.73" y="496.60" text-anchor="end" font-size="12.8" fill="#606060" transform="rotate(-50 1062.73 496.60)">07 Nov 2023</text>
<text x="1086.51" y="496.60" text-anchor="end" font-size="12.8" fill="#606060" transform="rotate(-50 1086.51 496.60)">10 Nov 2023</text>
<text x="1110.30" y="496.60" text-anchor="end" font-size="12.8" fill="#606060" transform="rotate(-50 1110.30 496.60)">13 Nov 2023</text>
<text x="1134.08" y="496.60" text-anchor="end" font-size="12.8" fill="#606060" transform="rotate(-50 1134.08 496.60)">16 Nov 2023</text>
<text x="1157.86" y="496.60" text-anchor="end" font-size="12.8" fill="#606060" transform="rotate(-50 1157.86 496.60)">19 Nov 2023</text>
<text x="1181.65" y="496.60" text-anchor="end" font-size="12.8" fill="#606060" transform="rotate(-50 1181.65 496.60)">22 Nov 2023</text>
<text x="1205.43" y="496.60" text-anchor="end" font-size="12.8" fill="#606060" transform="rotate(-50 1205.43 496.60)">25 Nov 2023</text>
<text x="1229.22" y="496.60" text-anchor="end" font-size="12.8" fill="#606060" transform="rotate(-50 1229.22 496.60)">28 Nov 2023</text>
<text x="1253.00" y="496.60" text-anchor="end" font-size="12.8" fill="#606060" transform="rotate(-50 1253.00 496.60)">01 Dec 2023</text>
<text x="1276.78" y="496.60" text-anchor="end" font-size="12.8" fill="#606060" transform="rotate(-50 1276.78 496.60)">04 Dec 2023</text>
<text x="1300.57" y="496.60" text-anchor="end" font-size="12.8" fill="#606060" transform="rotate(-50 1300.57 496.60)">07 Dec 2023</text>
<text x="1324.35" y="496.60" text-anchor="end" font-size="12.8" fill="#606060" transform="rotate(-50 1324.35 496.60)">10 Dec 2023</text>
<text x="1348.14" y="496.60" text-anchor="end" font-size="12.8" fill="#606060" transform="rotate(-50 1348.14 496.60)">13 Dec 2023</text>
<text x="1371.92" y="496.60" text-anchor="end" font-size="12.8" fill="#606060" transform="rotate(-50 1371.92 496.60)">16 Dec 2023</text>
<text x="1395.70" y="496.60" text-anchor="end" font-size="12.8" fill="#606060" transform="rotate(-50 1395.70 496.60)">19 Dec 2023</text>
<text x="1419.49" y="496.60" text-anchor="end" font-size="12.8" fill="#606060" transform="rotate(-50 1419.49 496.60)">22 Dec 2023</text>
<text x="1443.27" y="496.60" text-anchor="end" font-size="12.8" fill="#606060" transform="rotate(-50 1443.27 496.60)">25 Dec 2023</text>
<text x="1467.06" y="496.60" text-anchor="end" font-size="12.8" fill="#606060" transform="rotate(-50 1467.06 496.60)">28 Dec 2023</text>
<text x="1490.84" y="496.60" text-anchor="end" font-size="12.8" fill="#606060" transform="rotate(-50 1490.84 496.60)">31 Dec 2023</text>
<text x="1514.62" y="496.60" text-anchor="end" font-size="12.8" fill="#606060" transform="rotate(-50 1514.62 496.60)">03 Jan 2024</text>
<text x="790.5" y="570.5" text-anchor="middle" font-size="12.8" fill="#606060">Date</text>
<rect x="650.5" y="265" width="46" height="16" fill="#3a70ad"/>
<text x="701" y="277.5" font-size="12.85" fill="#606060">[FURN_8220] Four Person Desk</text>
</svg>
<!-- table -->
<div class="tbl" style="left:8.8px;top:579.5px;width:1519.7px;height:270px"></div>
<div class="abs" style="left:9px;top:793px;width:944px;height:52.5px;background:#e7e9ed"></div>
<div class="hl" style="left:8.8px;top:579.5px;width:1519.7px"></div>
<div class="hl" style="left:8.8px;top:629.5px;width:1519.7px"></div>
<div class="hl" style="left:8.8px;top:686.8px;width:1519.7px"></div>
<div class="hl" style="left:8.8px;top:743.3px;width:1519.7px"></div>
<div class="hl" style="left:8.8px;top:792.6px;width:1519.7px"></div>
<div class="hl" style="left:8.8px;top:845.3px;width:1519.7px"></div>
<div class="vl" style="left:8.5px;top:579.5px;height:270px"></div>
<div class="vl" style="left:1528px;top:579.5px;height:270px"></div>
<div class="vl" style="left:642px;top:579.5px;height:213.5px"></div>
<div class="vl" style="left:812.6px;top:579.5px;height:270px"></div>
<div class="vl" style="left:952px;top:579.5px;height:270px"></div>
<div class="vl" style="left:1298px;top:579.5px;height:213.5px"></div>
<div class="vl" style="left:1298px;top:845.5px;height:5px"></div>
<div class="btn prim" style="left:201.6px;top:644.3px;width:88px;height:29.3px"></div>
<div class="btn prim" style="left:203.5px;top:700.8px;width:88.2px;height:29.2px"></div>
<svg class="abs" style="left:960px;top:645px" width="30" height="90" viewBox="0 0 30 90">
<path id="star" transform="translate(14.8 20.5) scale(1.1) translate(-14.8 -20.5)" d="M14.8,4.2 L17.1,9.9 L23.2,10.4 L18.5,14.3 L20,20.3 L14.8,17 L9.6,20.3 L11.1,14.3 L6.4,10.4 L12.5,9.9 Z" fill="none" stroke="#a0a0a0" stroke-width="1.1" stroke-linejoin="round"/>
<use href="#star" y="56.7"/>
</svg>

<span id="nav_app" class="t" style="left:41.90px;top:10.52px;font-size:19px;color:#374151;font-weight:400;letter-spacing:-0.383px">Inventory</span>
<span id="nav1" class="t" style="left:139.80px;top:12.68px;font-size:15.5px;color:#374151;font-weight:400;letter-spacing:0.072px">Overview</span>
<span id="nav2" class="t" style="left:228.40px;top:12.68px;font-size:15.5px;color:#374151;font-weight:400;letter-spacing:0.075px">Operations</span>
<span id="nav3" class="t" style="left:328.60px;top:12.68px;font-size:15.5px;color:#374151;font-weight:400;letter-spacing:0.203px">Products</span>
<span id="nav4" class="t" style="left:415.00px;top:12.68px;font-size:15.5px;color:#374151;font-weight:400;letter-spacing:0.048px">Reporting</span>
<span id="nav5" class="t" style="left:506.20px;top:12.68px;font-size:15.5px;color:#374151;font-weight:400;letter-spacing:0.224px">Configuration</span>
<span id="company" class="t" style="left:1246.10px;top:12.48px;font-size:15.5px;color:#374151;font-weight:400;letter-spacing:-0.057px">My Company (San Francisco)</span>
<span id="b_repl" class="t" style="left:20.10px;top:63.96px;font-size:15.4px;color:#ffffff;font-weight:400;-webkit-text-stroke:0.5px #ffffff;letter-spacing:0.231px">Replenish</span>
<span id="b_upd" class="t" style="left:118.40px;top:63.86px;font-size:15.4px;color:#374151;font-weight:400;-webkit-text-stroke:0.4px #374151;letter-spacing:0.412px">Update Quantity</span>
<span id="bc1" class="t" style="left:251.70px;top:54.73px;font-size:14.5px;color:#287b7e;font-weight:400;-webkit-text-stroke:0.5px #287b7e;letter-spacing:0.481px">Stock</span>
<span id="bc2" class="t" style="left:251.70px;top:72.88px;font-size:15.5px;color:#374151;font-weight:400;letter-spacing:0.020px">Forecasted Report</span>
<span id="title" class="t" style="left:9.10px;top:127.67px;font-size:20px;color:#287b7e;font-weight:400;-webkit-text-stroke:0.3px #287b7e;letter-spacing:-0.074px">[FURN_8220] Four Person Desk</span>
<span id="voh" class="t" style="left:9.10px;top:158.38px;font-size:15.5px;color:#111827;font-weight:400;-webkit-text-stroke:0.3px #111827;letter-spacing:0.012px">Value On Hand:</span>
<span id="vohv" class="t" style="left:122.90px;top:158.38px;font-size:15.5px;color:#287b7e;font-weight:400;-webkit-text-stroke:0.3px #287b7e;letter-spacing:0.690px">$ 50000.00</span>
<span id="n1" class="t" style="left:1010.40px;top:127.15px;font-size:20.5px;color:#287b7e;font-weight:400;-webkit-text-stroke:0.4px #287b7e;letter-spacing:0.172px">20.00</span>
<span id="op1" class="t" style="left:1101.90px;top:127.15px;font-size:20.5px;color:#111827;font-weight:400;-webkit-text-stroke:0.4px #111827;letter-spacing:0.000px">+</span>
<span id="n2" class="t" style="left:1160.30px;top:127.15px;font-size:20.5px;color:#111827;font-weight:400;-webkit-text-stroke:0.4px #111827;letter-spacing:0.065px">0.00</span>
<span id="op2" class="t" style="left:1247.10px;top:127.15px;font-size:20.5px;color:#111827;font-weight:400;-webkit-text-stroke:0.4px #111827;letter-spacing:0.000px">-</span>
<span id="n3" class="t" style="left:1297.20px;top:127.15px;font-size:20.5px;color:#111827;font-weight:400;-webkit-text-stroke:0.4px #111827;letter-spacing:-0.278px">14.00</span>
<span id="op3" class="t" style="left:1389.40px;top:127.15px;font-size:20.5px;color:#111827;font-weight:400;-webkit-text-stroke:0.4px #111827;letter-spacing:0.000px">=</span>
<span id="n4" class="t" style="left:1436.00px;top:127.15px;font-size:20.5px;color:#111827;font-weight:400;-webkit-text-stroke:0.4px #111827;letter-spacing:0.066px">6.00 Units</span>
<span id="l1" class="t" style="left:1006.10px;top:161.02px;font-size:15.1px;color:#4b5563;font-weight:400;letter-spacing:0.062px">On Hand</span>
<span id="l2" class="t" style="left:1148.40px;top:161.02px;font-size:15.1px;color:#4b5563;font-weight:400;letter-spacing:0.363px">Incoming</span>
<span id="l3" class="t" style="left:1290.40px;top:161.02px;font-size:15.1px;color:#4b5563;font-weight:400;letter-spacing:0.391px">Outgoing</span>
<span id="l4" class="t" style="left:1443.40px;top:161.02px;font-size:15.1px;color:#4b5563;font-weight:400;letter-spacing:0.277px">Forecasted</span>
<span id="b_meas" class="t" style="left:37.40px;top:213.12px;font-size:15.1px;color:#ffffff;font-weight:400;-webkit-text-stroke:0.4px #ffffff;letter-spacing:0.460px">Measures</span>
<span id="b_ins" class="t" style="left:151.80px;top:213.12px;font-size:15.1px;color:#374151;font-weight:400;-webkit-text-stroke:0.3px #374151;letter-spacing:0.466px">Insert in Spreadsheet</span>
<span id="th1" class="t" style="left:22.40px;top:597.67px;font-size:14.8px;color:#374151;font-weight:400;letter-spacing:0.358px">Replenishment</span>
<span id="th2" class="t" style="left:655.90px;top:597.67px;font-size:14.8px;color:#374151;font-weight:400;letter-spacing:0.388px">Receipt</span>
<span id="th3" class="t" style="left:902.00px;top:597.67px;font-size:14.8px;color:#374151;font-weight:400;letter-spacing:0.672px">Units</span>
<span id="th4" class="t" style="left:964.90px;top:597.67px;font-size:14.8px;color:#374151;font-weight:400;letter-spacing:0.534px">Used by</span>
<span id="th5" class="t" style="left:1311.00px;top:597.67px;font-size:14.8px;color:#374151;font-weight:400;letter-spacing:0.478px">Delivery</span>
<span id="r1a" class="t" style="left:22.40px;top:650.87px;font-size:14.8px;color:#287b7e;font-weight:400;letter-spacing:0.467px">WH/OUT/00011</span>
<span id="r1b" class="t" style="left:136.10px;top:650.87px;font-size:14.8px;color:#374151;font-weight:400;letter-spacing:0.432px">reserved</span>
<span id="r1u" class="t" style="left:210.90px;top:652.11px;font-size:14.4px;color:#ffffff;font-weight:400;-webkit-text-stroke:0.5px #ffffff;letter-spacing:0.377px">Unreserve</span>
<span id="r1n" class="t" style="left:900.80px;top:650.87px;font-size:14.8px;color:#374151;font-weight:400;letter-spacing:0.018px">10.00</span>
<span id="r1w" class="t" style="left:988.60px;top:651.87px;font-size:14.8px;color:#287b7e;font-weight:400;-webkit-text-stroke:0.3px #287b7e;letter-spacing:0.485px">WH/OUT/00011</span>
<span id="r1d" class="t" style="left:1311.00px;top:650.87px;font-size:14.8px;color:#374151;font-weight:400;letter-spacing:0.759px">10/04/2023</span>
<span id="r2a" class="t" style="left:22.30px;top:707.67px;font-size:14.8px;color:#287b7e;font-weight:400;letter-spacing:0.558px">WH/OUT/00012</span>
<span id="r2b" class="t" style="left:137.90px;top:707.67px;font-size:14.8px;color:#374151;font-weight:400;letter-spacing:0.560px">reserved</span>
<span id="r2u" class="t" style="left:212.80px;top:709.11px;font-size:14.4px;color:#ffffff;font-weight:400;-webkit-text-stroke:0.5px #ffffff;letter-spacing:0.377px">Unreserve</span>
<span id="r2n" class="t" style="left:907.40px;top:707.67px;font-size:14.8px;color:#374151;font-weight:400;letter-spacing:0.562px">4.00</span>
<span id="r2w" class="t" style="left:988.60px;top:708.67px;font-size:14.8px;color:#287b7e;font-weight:400;-webkit-text-stroke:0.3px #287b7e;letter-spacing:0.594px">WH/OUT/00012</span>
<span id="r2d" class="t" style="left:1311.00px;top:707.67px;font-size:14.8px;color:#374151;font-weight:400;letter-spacing:0.759px">10/04/2023</span>
<span id="r3a" class="t" style="left:22.40px;top:762.17px;font-size:14.8px;color:#374151;font-weight:400;letter-spacing:0.372px">Free Stock</span>
<span id="r3n" class="t" style="left:906.40px;top:762.17px;font-size:14.8px;color:#374151;font-weight:400;letter-spacing:0.895px">6.00</span>
<span id="r4a" class="t" style="left:22.40px;top:811.87px;font-size:14.8px;color:#374151;font-weight:400;letter-spacing:0.421px">Forecasted Inventory</span>
<span id="r4n" class="t" style="left:906.40px;top:811.87px;font-size:14.8px;color:#374151;font-weight:400;letter-spacing:0.895px">6.00</span>
</body></html>
